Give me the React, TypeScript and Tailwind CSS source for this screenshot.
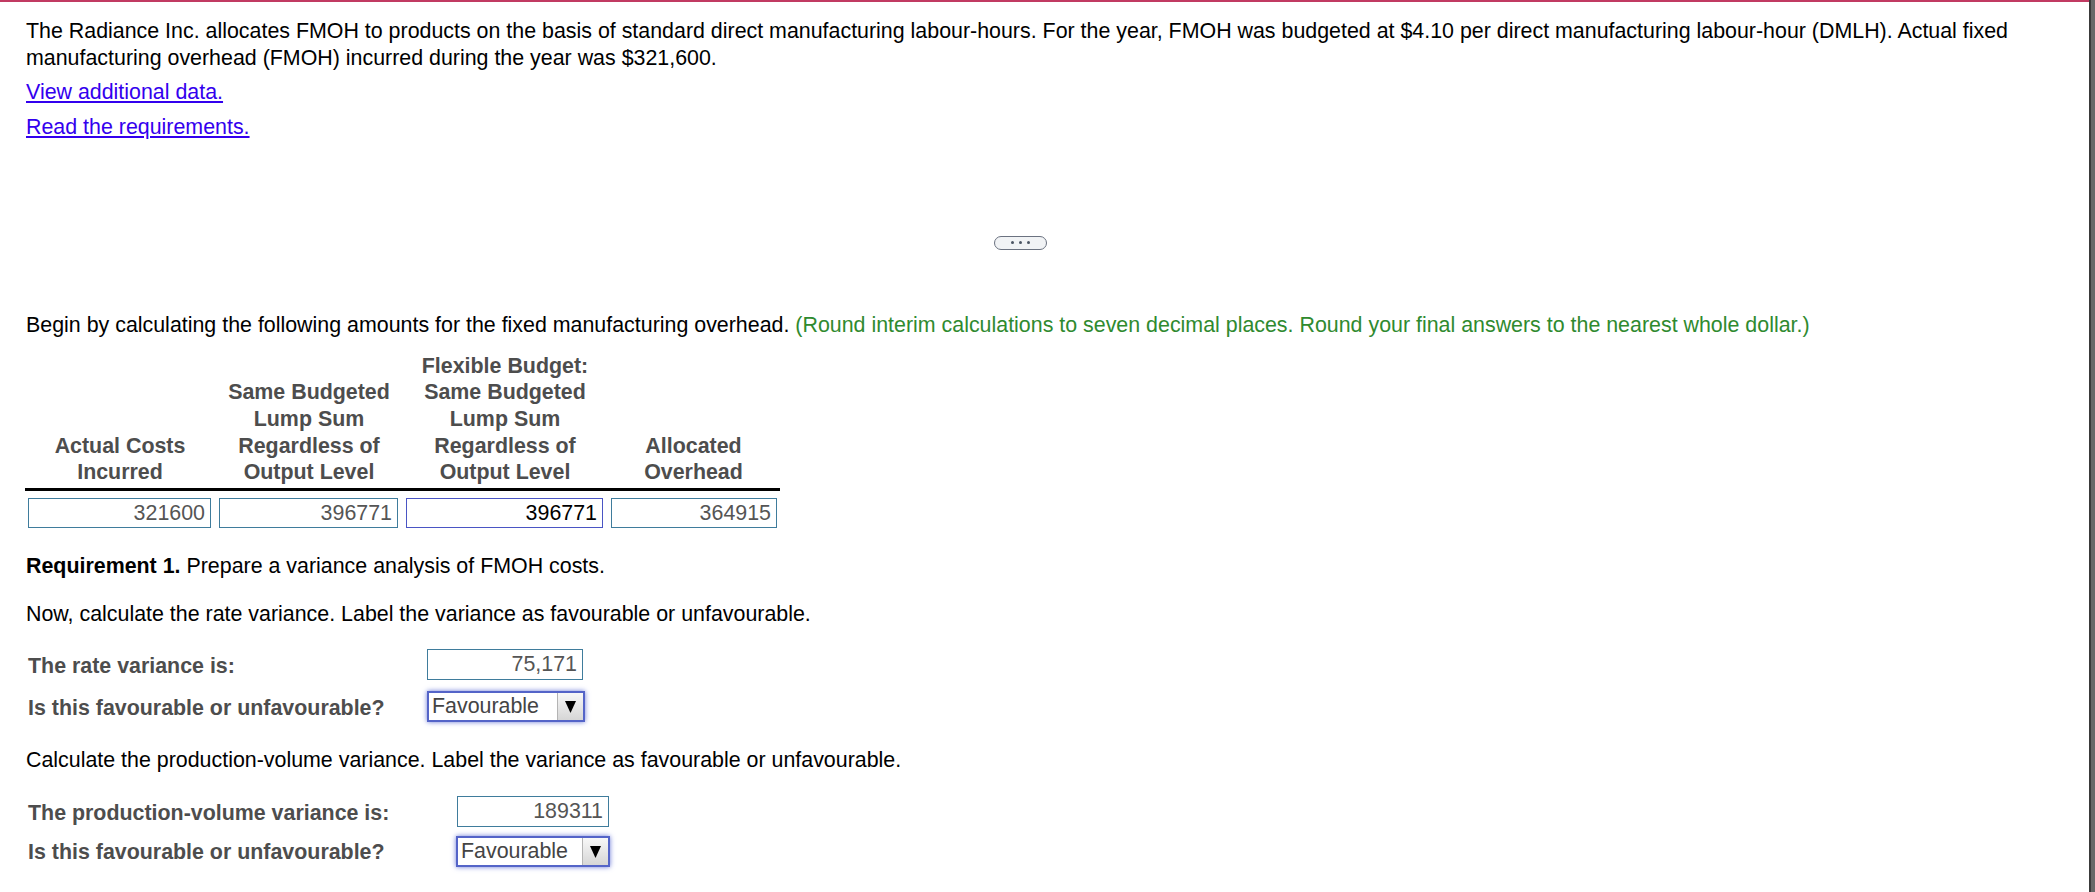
import React from "react"

const headers: React.ReactNode[] = [
  <>Actual Costs<br />Incurred</>,
  <>Same Budgeted<br />Lump Sum<br />Regardless of<br />Output Level</>,
  <>Flexible Budget:<br />Same Budgeted<br />Lump Sum<br />Regardless of<br />Output Level</>,
  <>Allocated<br />Overhead</>,
]

function Box({ value, className }: { value: string; className: string }) {
  return (
    <div className={`h-[30px] border pr-[5px] text-right leading-[28px] ${className}`}>
      {value}
    </div>
  )
}

function Dropdown({ width }: { width: string }) {
  return (
    <div
      className={`flex h-[31px] ${width} border-2 border-[#5464c8] bg-white shadow-[0_0_5px_#6c7ad8]`}
    >
      <span className="flex-1 pl-[3px] leading-[27px] text-[#444]">Favourable</span>
      <span className="flex w-[26px] items-center justify-center border-l border-[#b4b4b4] bg-gradient-to-b from-[#f8f8f8] to-[#d6d6d6]">
        <svg width="11" height="12" viewBox="0 0 11 12">
          <polygon points="0,0 11,0 5.5,12" fill="#000" />
        </svg>
      </span>
    </div>
  )
}

export default function App() {
  return (
    <div className="flex h-[892px] w-full overflow-hidden bg-white font-['Liberation_Sans',Arial,sans-serif] text-[21.4px] leading-[26.7px] text-black">
      <main className="flex-1 border-t-2 border-[#c13a62] pl-[26px] pt-[16px]">
        <p className="whitespace-nowrap">
          The Radiance Inc. allocates FMOH to products on the basis of standard direct manufacturing labour-hours. For the year, FMOH was budgeted at $4.10 per direct manufacturing labour-hour (DMLH). Actual fixed
          <br />
          manufacturing overhead (FMOH) incurred during the year was $321,600.
        </p>
        <p className="mt-[8px]">
          <a href="#" className="text-[#3300ee] underline">View additional data.</a>
        </p>
        <p className="mt-[8px]">
          <a href="#" className="text-[#3300ee] underline">Read the requirements.</a>
        </p>

        {/* collapsed section toggle */}
        <div className="ml-[968px] mt-[95px] flex h-[14px] w-[53px] items-center justify-center gap-[5px] rounded-full border-[1.5px] border-[#6b7280] bg-[#f1f3f5]">
          <span className="h-[3px] w-[3px] rounded-full bg-[#4b5563]" />
          <span className="h-[3px] w-[3px] rounded-full bg-[#4b5563]" />
          <span className="h-[3px] w-[3px] rounded-full bg-[#4b5563]" />
        </div>

        <p className="mt-[62px] whitespace-nowrap">
          Begin by calculating the following amounts for the fixed manufacturing overhead.{" "}
          <span className="text-[#2f8a2f]">
            (Round interim calculations to seven decimal places. Round your final answers to the nearest whole dollar.)
          </span>
        </p>

        <div className="-ml-[1px] mt-[14px] w-[755px]">
          <div className="grid grid-cols-[190px_188px_204px_173px] border-b-[3px] border-black pb-[2px] font-bold text-[#4d4d4d]">
            {headers.map((h, i) => (
              <div key={i} className="flex items-end justify-center whitespace-nowrap text-center">
                <div>{h}</div>
              </div>
            ))}
          </div>
        </div>
        <div className="ml-[2px] mt-[7px] flex gap-[8px]">
          <Box value="321600" className="w-[183px] border-[#3f7c9c] text-[#555]" />
          <Box value="396771" className="w-[179px] border-[#3f7c9c] text-[#555]" />
          <Box value="396771" className="w-[197px] border-[#4a55c4] text-black" />
          <Box value="364915" className="w-[166px] border-[#3f7c9c] text-[#555]" />
        </div>

        <p className="mt-[25px]">
          <span className="font-bold">Requirement 1.</span> Prepare a variance analysis of FMOH costs.
        </p>
        <p className="mt-[21px]">
          Now, calculate the rate variance. Label the variance as favourable or unfavourable.
        </p>

        <div className="ml-[2px] mt-[22px] grid grid-cols-[399px_auto] items-center gap-y-[11px] font-bold text-[#4d4d4d]">
          <span className="pt-[3px]">The rate variance is:</span>
          <div className="h-[31px] w-[156px] border border-[#3f7c9c] pr-[5px] text-right font-normal leading-[29px] text-[#555]">
            75,171
          </div>
          <span className="pt-[2px]">Is this favourable or unfavourable?</span>
          <div className="font-normal">
            <Dropdown width="w-[158px]" />
          </div>
        </div>

        <p className="mt-[25px]">
          Calculate the production-volume variance. Label the variance as favourable or unfavourable.
        </p>

        <div className="ml-[2px] mt-[22px] grid grid-cols-[429px_auto] items-center gap-y-[9px] font-bold text-[#4d4d4d]">
          <span className="pt-[3px]">The production-volume variance is:</span>
          <div className="h-[31px] w-[152px] border border-[#3f7c9c] pr-[5px] text-right font-normal leading-[29px] text-[#555]">
            189311
          </div>
          <span className="pt-[2px]">Is this favourable or unfavourable?</span>
          <div className="-ml-[1px] font-normal">
            <Dropdown width="w-[154px]" />
          </div>
        </div>
      </main>
      <div className="w-[6px] border-l-2 border-[#3a3a3a] bg-[#686868]" />
    </div>
  )
}
